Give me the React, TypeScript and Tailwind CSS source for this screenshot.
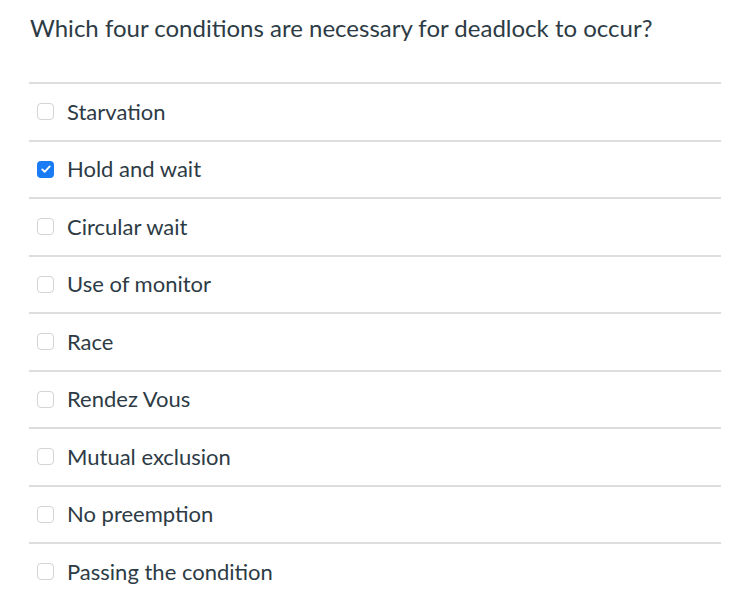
import React, { useState } from 'react';

const options = [
  'Starvation',
  'Hold and wait',
  'Circular wait',
  'Use of monitor',
  'Race',
  'Rendez Vous',
  'Mutual exclusion',
  'No preemption',
  'Passing the condition',
];

const CheckBox: React.FC<{ checked: boolean }> = ({ checked }) =>
  checked ? (
    <span className="flex h-[17px] w-[17px] items-center justify-center rounded-[4px] bg-[#1a7cf5]">
      <svg viewBox="0 0 16 16" className="h-[12px] w-[12px]" fill="none">
        <path d="M3 8.5l3.2 3.2L13 4.5" stroke="#fff" strokeWidth="2.4" strokeLinecap="round" strokeLinejoin="round" />
      </svg>
    </span>
  ) : (
    <span className="block h-[17px] w-[17px] rounded-[4px] border border-[#d4d4d4] bg-white" />
  );

const App: React.FC = () => {
  const [checked, setChecked] = useState<Record<string, boolean>>({ 'Hold and wait': true });

  return (
    <div className="min-h-screen bg-white text-[#2d3b45]" style={{ fontFamily: 'Lato, "Noto Sans", sans-serif' }}>
      <h1 className="pl-[30px] pt-[12px] text-[24px] leading-[32px] font-normal">
        Which four conditions are necessary for deadlock to occur?
      </h1>

      <div className="ml-[29px] mt-[38px] w-[692px]">
        {options.map(o => (
          <label
            key={o}
            className="flex h-[57.5px] cursor-pointer items-center border-t-2 border-[#dddddd] pl-[8px]"
            onClick={() => setChecked(c => ({ ...c, [o]: !c[o] }))}
          >
            <CheckBox checked={!!checked[o]} />
            <span className="ml-[13px] text-[22px] leading-none">{o}</span>
          </label>
        ))}
      </div>
    </div>
  );
};

export default App;
